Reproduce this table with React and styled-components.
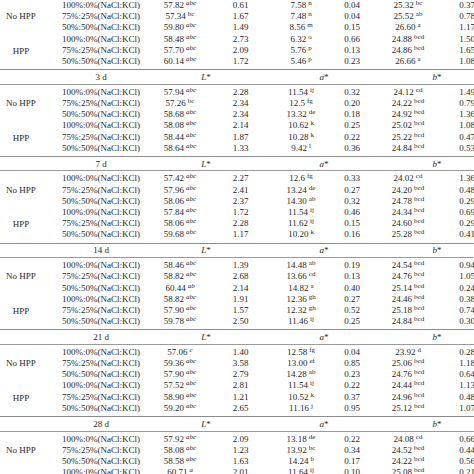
import React from 'react';
import styled, { createGlobalStyle } from 'styled-components';

const GlobalStyle = createGlobalStyle`
  html, body {
    margin: 0;
    padding: 0;
    background: #fff;
    overflow: hidden;
  }
`;

const widths = [42, 118, 40, 81, 40, 62, 50, 68];
const ratios = ['100%:0%', '75%:25%', '50%:50%'];

// each row: L mean, L sd, a mean, a sd, b mean, b sd
const sections = [
  {
    day: null,
    rows: [
      ['57.82 abc', '0.61', '7.58 n', '0.04', '25.32 bc', '0.37'],
      ['57.34 bc', '1.67', '7.48 n', '0.04', '25.52 ab', '0.78'],
      ['59.80 abc', '1.49', '8.56 m', '0.15', '26.60 a', '1.17'],
      ['58.48 abc', '2.73', '6.32 o', '0.66', '24.88 bcd', '1.50'],
      ['57.70 abc', '2.09', '5.76 p', '0.13', '24.86 bcd', '1.65'],
      ['60.14 abc', '1.72', '5.46 p', '0.23', '26.66 a', '1.08'],
    ],
  },
  {
    day: '3 d',
    rows: [
      ['57.94 abc', '2.28', '11.54 ij', '0.32', '24.12 cd', '1.49'],
      ['57.26 bc', '2.34', '12.5 fg', '0.20', '24.22 bcd', '0.79'],
      ['58.68 abc', '2.34', '13.32 de', '0.18', '24.92 bcd', '1.36'],
      ['58.08 abc', '2.14', '10.62 k', '0.25', '25.02 bcd', '1.08'],
      ['58.44 abc', '1.87', '10.28 k', '0.22', '25.22 bcd', '0.47'],
      ['58.64 abc', '1.33', '9.42 l', '0.36', '24.84 bcd', '0.53'],
    ],
  },
  {
    day: '7 d',
    rows: [
      ['57.42 abc', '2.27', '12.6 fg', '0.33', '24.02 cd', '1.36'],
      ['57.96 abc', '2.41', '13.24 de', '0.27', '24.20 bcd', '0.48'],
      ['58.06 abc', '2.37', '14.30 ab', '0.32', '24.78 bcd', '0.29'],
      ['57.84 abc', '1.72', '11.54 ij', '0.46', '24.34 bcd', '0.69'],
      ['58.06 abc', '2.28', '11.62 ij', '0.15', '24.60 bcd', '0.29'],
      ['59.68 abc', '1.17', '10.20 k', '0.16', '25.28 bcd', '0.41'],
    ],
  },
  {
    day: '14 d',
    rows: [
      ['58.46 abc', '1.39', '14.48 ab', '0.19', '24.54 bcd', '0.94'],
      ['58.82 abc', '2.68', '13.66 cd', '0.13', '24.76 bcd', '1.05'],
      ['60.44 ab', '2.14', '14.82 a', '0.40', '25.14 bcd', '0.24'],
      ['58.82 abc', '1.91', '12.36 gh', '0.27', '24.46 bcd', '0.38'],
      ['57.90 abc', '1.57', '12.32 gh', '0.52', '25.18 bcd', '0.74'],
      ['59.78 abc', '2.50', '11.46 ij', '0.25', '24.84 bcd', '0.30'],
    ],
  },
  {
    day: '21 d',
    rows: [
      ['57.06 c', '1.40', '12.58 fg', '0.04', '23.92 d', '0.28'],
      ['59.36 abc', '3.58', '13.00 ef', '0.85', '25.06 bcd', '1.18'],
      ['57.90 abc', '2.79', '14.28 ab', '0.23', '24.76 bcd', '0.64'],
      ['57.52 abc', '2.81', '11.54 ij', '0.22', '24.44 bcd', '1.13'],
      ['58.90 abc', '1.21', '10.52 k', '0.37', '24.96 bcd', '0.48'],
      ['59.20 abc', '2.65', '11.16 j', '0.95', '25.12 bcd', '1.07'],
    ],
  },
  {
    day: '28 d',
    rows: [
      ['57.92 abc', '2.09', '13.18 de', '0.22', '24.08 cd', '0.66'],
      ['58.08 abc', '1.23', '13.92 bc', '0.34', '24.52 bcd', '0.44'],
      ['58.58 abc', '1.63', '14.24 b', '0.17', '24.22 bcd', '0.56'],
      ['60.71 a', '2.01', '11.64 ij', '0.10', '25.08 bcd', '0.21'],
      ['58.36 abc', '1.48', '10.86 k', '0.28', '25.16 bcd', '0.52'],
      ['59.04 abc', '2.12', '10.94 k', '0.19', '24.98 bcd', '0.61'],
    ],
  },
];

const Page = styled.div`
  width: 474px;
  height: 474px;
  overflow: hidden;
  background: #fff;
`;

const Table = styled.table`
  margin-top: -2px;
  width: 501px;
  table-layout: fixed;
  border-collapse: collapse;
  font-family: 'Liberation Serif', 'Times New Roman', serif;
  font-size: 9px;
  color: #1f1f1f;
`;

const Col = styled.col`
  width: ${({ $w }) => $w}px;
`;

const Row = styled.tr`
  & > td {
    height: 11.2px;
    line-height: 11.2px;
    padding: 0;
    padding-top: ${({ $edge }) => ($edge === 'first' ? '2px' : '0')};
    padding-bottom: ${({ $edge }) => ($edge === 'last' ? '2px' : '0')};
  }
`;

const Cell = styled.td`
  text-align: center;
  white-space: nowrap;
  vertical-align: middle;
`;

const Group = styled.td`
  text-align: center;
  white-space: nowrap;
  vertical-align: middle;
`;

const HeadRow = styled.tr`
  border-top: 1.5px solid #8c8c8c;
  border-bottom: 1px solid #9a9a9a;
`;

const HeadCell = styled.td`
  height: 13.5px;
  padding: 0 ${({ $shift }) => $shift || 0}px 0 0;
  text-align: center;
  white-space: nowrap;
  vertical-align: middle;
`;

const Var = styled.span`
  font-style: italic;
`;

const Sup = styled.sup`
  font-size: 7px;
  line-height: 0;
  vertical-align: 3px;
  margin-left: 2px;
  font-style: ${({ $italic }) => ($italic ? 'italic' : 'normal')};
`;

const Mean = ({ value, italic }) => {
  const [num, letters] = value.split(' ');
  return (
    <Cell>
      {num}
      <Sup $italic={italic && letters !== 'bc'}>{letters}</Sup>
    </Cell>
  );
};

export default function App() {
  return (
    <Page>
      <GlobalStyle />
      <Table>
        <colgroup>
          {widths.map((w, i) => (
            <Col key={i} $w={w} />
          ))}
        </colgroup>
        {sections.map((s, si) => (
          <tbody key={si}>
            {s.day && (
              <HeadRow>
                <HeadCell />
                <HeadCell>{s.day}</HeadCell>
                <HeadCell colSpan={2} $shift={29}>
                  <Var>L</Var>*
                </HeadCell>
                <HeadCell colSpan={2} $shift={16}>
                  <Var>a</Var>*
                </HeadCell>
                <HeadCell colSpan={2} $shift={10}>
                  <Var>b</Var>*
                </HeadCell>
              </HeadRow>
            )}
            {s.rows.map((r, ri) => (
              <Row key={ri} $edge={ri === 0 ? 'first' : ri === 5 ? 'last' : null}>
                {ri % 3 === 0 && <Group rowSpan={3}>{ri === 0 ? 'No HPP' : 'HPP'}</Group>}
                <Cell>{ratios[ri % 3]}(NaCl:KCl)</Cell>
                <Mean value={r[0]} italic />
                <Cell>{r[1]}</Cell>
                <Mean value={r[2]} />
                <Cell>{r[3]}</Cell>
                <Mean value={r[4]} />
                <Cell>{r[5]}</Cell>
              </Row>
            ))}
          </tbody>
        ))}
      </Table>
    </Page>
  );
}
